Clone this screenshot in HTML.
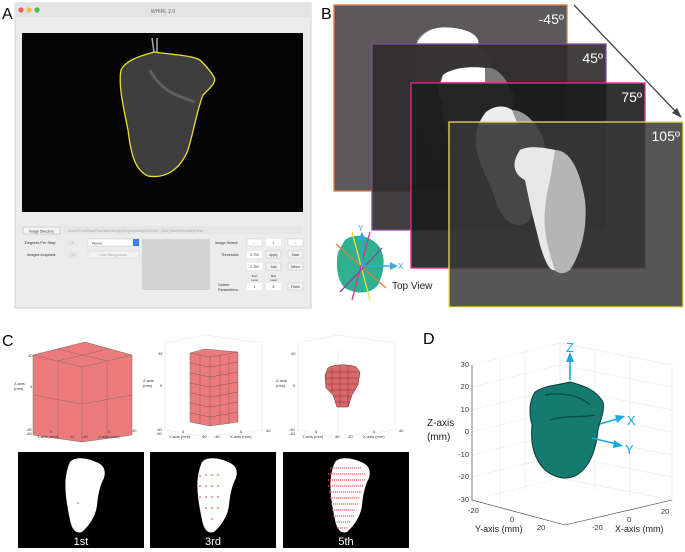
<!DOCTYPE html>
<html><head><meta charset="utf-8"><style>
html,body{margin:0;padding:0;background:#fff;}
svg{display:block;font-family:"Liberation Sans",sans-serif;}
</style></head><body>
<svg width="685" height="552" viewBox="0 0 685 552" xmlns="http://www.w3.org/2000/svg">
<rect width="685" height="552" fill="#fff"/>
<!-- Panel A -->
<text x="2" y="19" font-size="16">A</text>
<rect x="15" y="3" width="296" height="305" fill="#ececec" stroke="#d0d0d0"/>
<rect x="15" y="3" width="296" height="14" fill="#e4e4e4"/>
<circle cx="21" cy="10" r="2.6" fill="#f0605a"/><circle cx="29" cy="10" r="2.6" fill="#f4bd3a"/><circle cx="37" cy="10" r="2.6" fill="#3dc24a"/>
<text x="163" y="13" font-size="5" fill="#666" text-anchor="middle">WHIRL 2.0</text>
<rect x="22" y="33" width="281" height="179" fill="#050505"/>
<path d="M152,38 L154,52 M157,38 L157,52" stroke="#aaa" stroke-width="1.5"/>
<path d="M154,52 C140,56 126,60 121,70 C118,85 124,110 128,130 C131,155 135,170 148,176 C165,179 180,170 188,150 C194,130 197,110 203,95 C210,88 217,82 214,77 C210,70 205,65 200,60 C190,55 175,55 154,52 Z" fill="#3e3e3e" stroke="#e8e030" stroke-width="1.3"/>
<path d="M150,70 C160,90 175,95 195,102" stroke="#777" stroke-width="3" fill="none" opacity=".6"/>
<rect x="23" y="227" width="37" height="7" fill="#f4f4f4" stroke="#aaa" stroke-width=".5"/>
<text x="41.5" y="232.5" font-size="3.5" text-anchor="middle" fill="#333">Image Directory</text>
<rect x="63" y="226" width="240" height="8" fill="#e6e6e6"/>
<text x="68" y="232" font-size="3.3" fill="#aaa">/Users/Chris/Data/Panoramic/Imaging/Experiments/GMU/2017_0113_RabbitGeometry/Heart</text>
<g font-size="3.8" fill="#333">
<text x="25" y="244">Degrees Per Step:</text>
<text x="27" y="256">Images Acquired:</text>
<text x="215" y="244">Image Select:</text>
<text x="221" y="256">Threshold:</text>
<text x="218" y="286">Octree</text><text x="218" y="291">Parameters:</text>
<text x="144" y="243">Message Center:</text>
<text x="156" y="249" font-size="3.4">Found silhouettes!</text>
</g>
<rect x="68" y="239" width="10" height="7" fill="#e6e6e6"/><text x="73" y="244" font-size="3.4" fill="#aaa" text-anchor="middle">5</text>
<rect x="68" y="251" width="10" height="7" fill="#e6e6e6"/><text x="73" y="256" font-size="3.4" fill="#aaa" text-anchor="middle">72</text>
<rect x="88" y="239" width="51" height="7" fill="#fff" stroke="#bbb" stroke-width=".4"/><rect x="133" y="239" width="6" height="7" fill="#3f7fe0"/>
<text x="92" y="244.5" font-size="3.6" fill="#333">Above</text>
<rect x="88" y="251" width="51" height="7" fill="#f2f2f2" stroke="#ccc" stroke-width=".4"/><text x="113" y="256" font-size="3.4" fill="#aaa" text-anchor="middle">Load Backgrounds</text>
<rect x="142" y="239" width="68" height="51" fill="#d3d3d3"/>
<g font-size="3.4" fill="#333" text-anchor="middle">
<rect x="247" y="239" width="15" height="7" fill="#fff" stroke="#bbb" stroke-width=".4"/><text x="254.5" y="244">←</text>
<rect x="266" y="239" width="15" height="7" fill="#fff"/><text x="273.5" y="244">1</text>
<rect x="288" y="239" width="15" height="7" fill="#fff" stroke="#bbb" stroke-width=".4"/><text x="295.5" y="244">→</text>
<rect x="247" y="251" width="15" height="7" fill="#fff"/><text x="254.5" y="256">0.750</text>
<rect x="266" y="251" width="15" height="7" fill="#f4f4f4" stroke="#bbb" stroke-width=".4"/><text x="273.5" y="256">Apply</text>
<rect x="288" y="251" width="15" height="7" fill="#f4f4f4" stroke="#bbb" stroke-width=".4"/><text x="295.5" y="256">Save</text>
<rect x="247" y="263" width="15" height="7" fill="#fff"/><text x="254.5" y="268">0.250</text>
<rect x="266" y="263" width="15" height="7" fill="#f4f4f4" stroke="#bbb" stroke-width=".4"/><text x="273.5" y="268">Add</text>
<rect x="288" y="263" width="15" height="7" fill="#f4f4f4" stroke="#bbb" stroke-width=".4"/><text x="295.5" y="268">Minus</text>
<text x="254.5" y="277" font-size="2.8">Start</text><text x="254.5" y="281" font-size="2.8">Level</text>
<text x="273.5" y="277" font-size="2.8">Max</text><text x="273.5" y="281" font-size="2.8">Level</text>
<rect x="247" y="283" width="15" height="7" fill="#fff"/><text x="254.5" y="288">1</text>
<rect x="266" y="283" width="15" height="7" fill="#fff"/><text x="273.5" y="288">8</text>
<rect x="288" y="283" width="15" height="7" fill="#f4f4f4" stroke="#bbb" stroke-width=".4"/><text x="295.5" y="288">Finish</text>
</g>
<!-- Panel B -->
<text x="321" y="19" font-size="16">B</text>
<rect x="334" y="5" width="233" height="186" fill="#5b5959" stroke="#e07a3a" stroke-width="1.3"/>
<path d="M417,40 C425,28 440,25 460,29 C475,32 480,40 478,48 C490,52 495,60 492,68 C480,80 470,95 460,110 C450,130 445,150 440,160 C430,155 420,140 418,120 C415,100 415,70 417,40Z" fill="#8a8a8a"/>
<path d="M417,43 C425,28 440,25 460,29 C475,32 480,40 478,44 L417,44Z" fill="#fff"/>
<rect x="372" y="44" width="234" height="186" fill="#2c2a2b" fill-opacity=".9" stroke="#8a4aa0" stroke-width="1.3"/>
<path d="M443,75 C452,68 470,66 485,68 C495,66 505,75 512,92 C520,105 505,120 500,135 C495,160 490,180 480,195 C470,190 460,175 455,155 C450,135 440,120 443,100 C436,95 438,85 443,75Z" fill="#7a7a7a"/>
<path d="M443,75 C452,68 470,66 485,68 L485,82 L441,82Z" fill="#fff"/>
<rect x="411" y="83" width="234" height="185" fill="#1d1c1d" fill-opacity=".9" stroke="#e0308a" stroke-width="1.3"/>
<path d="M486,112 C495,105 505,105 512,110 C525,110 540,125 545,145 C548,165 540,190 530,220 C520,230 505,225 497,205 C490,180 478,165 476,145 C475,130 480,118 486,112Z" fill="#9a9a9a"/>
<path d="M486,112 C495,105 505,105 512,110 L518,125 L478,125Z" fill="#eee"/>
<rect x="449" y="122" width="234" height="185" fill="#3a3839" fill-opacity=".85" stroke="#e8e040" stroke-width="1.3"/>
<path d="M520,150 C530,145 545,148 555,150 C570,150 580,170 585,200 C588,230 580,255 570,270 C560,278 550,270 545,255 C535,230 530,205 525,180 C515,175 510,165 520,150Z" fill="#b5b5b5"/>
<path d="M520,150 C530,145 545,148 555,150 L550,180 C540,220 545,240 555,270 C550,272 545,262 540,245 C535,225 530,205 525,180 C515,175 510,165 520,150Z" fill="#e8e8e8"/>
<g fill="#fff" font-size="14" text-anchor="end">
<text x="564" y="24">-45º</text><text x="603" y="63">45º</text><text x="642" y="102">75º</text><text x="680" y="141">105º</text>
</g>
<path d="M574,5 L678,114" stroke="#444" stroke-width="1.3"/><path d="M682,118 L672,113 L677,108Z" fill="#444"/>
<!-- top view -->
<path d="M345,240 C355,232 370,236 378,245 C386,255 385,270 378,285 C370,295 355,294 345,288 C336,280 336,262 338,252Z" fill="#2fb090"/>
<g stroke-width="1.3">
<line x1="336" y1="244" x2="386" y2="288" stroke="#e07a3a"/>
<line x1="352" y1="232" x2="370" y2="300" stroke="#e8e040"/>
<line x1="370" y1="232" x2="352" y2="300" stroke="#e0308a"/>
<line x1="382" y1="248" x2="340" y2="292" stroke="#8a4aa0"/>
<line x1="362" y1="266" x2="362" y2="236" stroke="#3aa8e0" stroke-width="1.5"/>
<line x1="362" y1="266" x2="392" y2="266" stroke="#3aa8e0" stroke-width="1.5"/>
</g>
<path d="M358,240 L362,232 L366,240Z" fill="#3aa8e0"/><path d="M390,262 L398,266 L390,270Z" fill="#3aa8e0"/>
<text x="358" y="231" font-size="8" fill="#3aa8e0">Y</text><text x="398" y="269" font-size="8" fill="#3aa8e0">X</text>
<text x="392" y="289" font-size="10" fill="#222">Top View</text>
<!-- Panel C -->
<text x="2" y="346" font-size="16">C</text>
<g font-size="4" fill="#333">
<path d="M85,342 L132,355 L132,435 L82,442 L33,435 L33,355Z" fill="#ee7b7b" stroke="#555" stroke-width=".4"/>
<path d="M33,355 L82,367 L132,355 M82,367 L82,442 M33,395 L82,404 L132,395 M58,349 L107,361 M108,349 L58,361 M58,361 L58,438 M107,361 L107,438" stroke="#666" stroke-width=".4" fill="none"/>
<text x="28" y="357">40</text><text x="14" y="385">Z-axis</text><text x="14" y="390">(mm)</text><text x="30" y="388">0</text><text x="26" y="431">-40</text><text x="26" y="435">-40</text>
<text x="50" y="433">0</text><text x="37" y="438">Y-axis (mm)</text><text x="70" y="438">40</text><text x="82" y="438">-40</text><text x="108" y="433">0</text><text x="98" y="438">X-axis (mm)</text><text x="132" y="432">40</text>
<!-- plot 2 -->
<g stroke="#ddd" stroke-width=".4" fill="none"><path d="M165,343 L165,430 L205,437 L262,430 L262,343 M205,437 L205,350 M165,343 L205,335 L262,343"/></g>
<path d="M190,353 L205,349 L238,352 L238,422 L210,426 L190,422Z" fill="#ee7b7b" stroke="#555" stroke-width=".4"/>
<path d="M190,353 L210,357 L238,352 M210,357 L210,426 M190,363 L210,367 L238,362 M190,373 L210,377 L238,372 M190,383 L210,387 L238,382 M190,393 L210,397 L238,392 M190,403 L210,407 L238,402 M190,413 L210,417 L238,412 M200,355 L200,424 M220,355 L220,424 M229,354 L229,424" stroke="#555" stroke-width=".4" fill="none"/>
<text x="158" y="355">40</text><text x="143" y="382">Z-axis</text><text x="143" y="387">(mm)</text><text x="160" y="387">0</text><text x="156" y="431">-40</text><text x="156" y="435">-40</text>
<text x="182" y="433">0</text><text x="169" y="438">Y-axis (mm)</text><text x="202" y="438">40</text><text x="214" y="438">-40</text><text x="240" y="433">0</text><text x="230" y="438">X-axis (mm)</text><text x="266" y="432">40</text>
<!-- plot 3 -->
<g stroke="#ddd" stroke-width=".4" fill="none"><path d="M298,343 L298,430 L338,437 L395,430 L395,343 M338,437 L338,350 M298,343 L338,335 L395,343"/></g>
<path d="M328,368 C332,364 350,364 356,367 L360,372 L358,385 L352,395 L348,407 L337,407 L333,395 L326,388 L325,375Z" fill="#d86a6a" stroke="#6a2020" stroke-width=".5"/>
<path d="M326,372 L358,372 M326,378 L358,378 M326,384 L358,384 M330,390 L354,390 M333,396 L351,396 M335,402 L349,402 M332,368 L332,392 M340,366 L340,406 M348,366 L348,406" stroke="#6a2020" stroke-width=".4"/>
<text x="291" y="355">40</text><text x="276" y="382">Z-axis</text><text x="276" y="387">(mm)</text><text x="293" y="387">0</text><text x="289" y="431">-40</text><text x="289" y="435">-40</text>
<text x="315" y="433">0</text><text x="302" y="438">Y-axis (mm)</text><text x="335" y="438">40</text><text x="347" y="438">-40</text><text x="373" y="433">0</text><text x="363" y="438">X-axis (mm)</text><text x="399" y="432">40</text>
</g>
<g>
<rect x="18" y="452" width="126" height="96" fill="#000"/>
<rect x="150" y="452" width="126" height="96" fill="#000"/>
<rect x="283" y="452" width="126" height="96" fill="#000"/>
<path id="h" d="M70,462 C75,456 88,458 96,462 C104,465 106,470 104,478 C100,485 98,495 97,505 C96,515 90,525 82,532 C76,534 72,530 70,520 C66,500 62,480 70,462Z" fill="#fff"/>
<use href="#h" x="132"/><use href="#h" x="265"/>
<circle cx="78" cy="503" r=".8" fill="#e05050"/>
<g fill="#e06060">
<circle cx="200" cy="476" r=".9"/><circle cx="206" cy="475" r=".9"/><circle cx="212" cy="475" r=".9"/><circle cx="218" cy="475" r=".9"/>
<circle cx="200" cy="486" r=".9"/><circle cx="206" cy="486" r=".9"/><circle cx="212" cy="486" r=".9"/><circle cx="218" cy="486" r=".9"/>
<circle cx="200" cy="497" r=".9"/><circle cx="206" cy="497" r=".9"/><circle cx="212" cy="497" r=".9"/><circle cx="218" cy="497" r=".9"/>
<circle cx="206" cy="508" r=".9"/><circle cx="212" cy="508" r=".9"/><circle cx="218" cy="508" r=".9"/><circle cx="212" cy="519" r=".9"/>
</g>
<g stroke="#e06060" stroke-width="1.2" stroke-dasharray="1.2 .8">
<path d="M330,468 L362,468 M328,474 L366,474 M328,480 L366,480 M328,486 L364,486 M329,492 L362,492 M330,498 L360,498 M331,504 L358,504 M332,510 L356,510 M333,516 L354,516 M335,522 L350,522 M338,528 L347,528"/>
</g>
<g fill="#fff" font-size="11" text-anchor="middle"><text x="81" y="545">1st</text><text x="213" y="545">3rd</text><text x="346" y="545">5th</text></g>
</g>
<!-- Panel D -->
<text x="423" y="344" font-size="16">D</text>
<g stroke="#e4e4e4" stroke-width=".5" fill="none">
<path d="M472,365 L560,343 L672,365 M560,343 L560,428 M472,500 L560,478 L672,500 M472,365 L472,500 M672,365 L672,500 M472,387 L560,365 L672,387 M472,410 L560,388 L672,410 M472,432 L560,410 L672,432 M472,455 L560,433 L672,455 M472,477 L560,455 L672,477 M500,360 L500,505 M525,350 L525,490 M595,350 L595,490 M630,355 L630,495"/>
</g>
<path d="M472,365 L472,500 L565,525 L672,500" stroke="#333" stroke-width=".6" fill="none"/>
<g font-size="7.5" fill="#333" text-anchor="end">
<text x="469" y="367">30</text><text x="469" y="389">20</text><text x="469" y="412">10</text><text x="469" y="434">0</text><text x="469" y="457">-10</text><text x="469" y="479">-20</text><text x="469" y="502">-30</text>
</g>
<text x="427" y="426" font-size="10" fill="#222">Z-axis</text><text x="427" y="440" font-size="10" fill="#222">(mm)</text>
<g font-size="7.5" fill="#333">
<text x="468" y="513">-20</text><text x="510" y="522">0</text><text x="537" y="530">20</text>
<text x="592" y="530">-20</text><text x="627" y="522">0</text><text x="661" y="514">20</text>
</g>
<text x="475" y="532" font-size="9" fill="#222">Y-axis (mm)</text><text x="615" y="532" font-size="9" fill="#222">X-axis (mm)</text>
<path d="M535,392 C545,385 560,385 570,382 C580,385 595,388 603,402 C605,412 600,420 598,430 C596,450 590,468 575,476 C565,480 555,478 545,470 C535,460 530,445 532,425 C528,410 530,400 535,392Z" fill="#157a70" stroke="#0a3a35" stroke-width="1"/>
<path d="M545,395 C560,392 580,395 590,405 M550,420 C565,415 580,418 595,415" stroke="#0a4a44" stroke-width="1.2" fill="none"/>
<g stroke="#19a8e0" stroke-width="1.6" fill="#19a8e0">
<line x1="570" y1="380" x2="570" y2="360"/><path d="M566,362 L570,352 L574,362Z" stroke="none"/>
<line x1="600" y1="424" x2="617" y2="419"/><path d="M615,415 L625,416 L617,423Z" stroke="none"/>
<line x1="592" y1="438" x2="616" y2="444"/><path d="M614,440 L623,446 L613,448Z" stroke="none"/>
</g>
<g fill="#19a8e0" font-size="13"><text x="566" y="352">Z</text><text x="627" y="425">X</text><text x="625" y="454">Y</text></g>
</svg>
</body></html>
